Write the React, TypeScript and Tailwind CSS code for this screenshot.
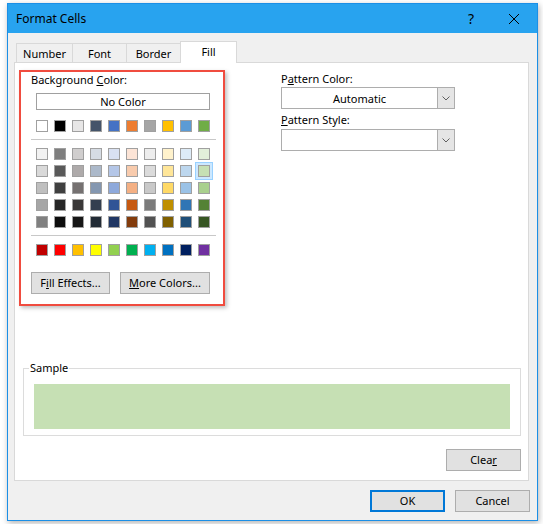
import React from 'react';

const themeRow = [
    'bg-[#ffffff]', 'bg-[#000000]', 'bg-[#e7e6e6]', 'bg-[#44546a]', 'bg-[#4472c4]',
    'bg-[#ed7d31]', 'bg-[#a5a5a5]', 'bg-[#ffc000]', 'bg-[#5b9bd5]', 'bg-[#70ad47]',
];

const tintRows = [
    ['bg-[#f2f2f2]', 'bg-[#7f7f7f]', 'bg-[#d0cece]', 'bg-[#d6dce4]', 'bg-[#d9e1f2]', 'bg-[#fce4d6]', 'bg-[#ededed]', 'bg-[#fff2cc]', 'bg-[#ddebf7]', 'bg-[#e2efda]'],
    ['bg-[#d9d9d9]', 'bg-[#595959]', 'bg-[#aeaaaa]', 'bg-[#acb9ca]', 'bg-[#b4c6e7]', 'bg-[#f8cbad]', 'bg-[#dbdbdb]', 'bg-[#ffe699]', 'bg-[#bdd7ee]', 'bg-[#c6e0b4]'],
    ['bg-[#bfbfbf]', 'bg-[#404040]', 'bg-[#757171]', 'bg-[#8497b0]', 'bg-[#8ea9db]', 'bg-[#f4b084]', 'bg-[#c9c9c9]', 'bg-[#ffd966]', 'bg-[#9bc2e6]', 'bg-[#a9d08e]'],
    ['bg-[#a6a6a6]', 'bg-[#262626]', 'bg-[#3a3838]', 'bg-[#333f4f]', 'bg-[#305496]', 'bg-[#c65911]', 'bg-[#7b7b7b]', 'bg-[#bf8f00]', 'bg-[#2f75b5]', 'bg-[#548235]'],
    ['bg-[#808080]', 'bg-[#0d0d0d]', 'bg-[#161616]', 'bg-[#222b35]', 'bg-[#203764]', 'bg-[#833c0c]', 'bg-[#525252]', 'bg-[#806000]', 'bg-[#1f4e78]', 'bg-[#375623]'],
];

const standardRow = [
    'bg-[#c00000]', 'bg-[#ff0000]', 'bg-[#ffc000]', 'bg-[#ffff00]', 'bg-[#92d050]',
    'bg-[#00b050]', 'bg-[#00b0f0]', 'bg-[#0070c0]', 'bg-[#002060]', 'bg-[#7030a0]',
];

const Swatch: React.FC<{ color: string; selected?: boolean }> = ({ color, selected }) => (
    <div
        className={`h-[12px] w-[12px] border border-[#a0a0a0] ${color} ${
            selected ? 'shadow-[0_0_0_2px_#cce8ff,0_0_0_3px_#99d1ff]' : ''
        }`}
    />
);

const SwatchRow: React.FC<{ colors: string[]; selectedIndex?: number }> = ({ colors, selectedIndex }) => (
    <div className="grid w-[174px] grid-cols-10 gap-x-[6px]">
        {colors.map((c, i) => (
            <Swatch key={i} color={c} selected={i === selectedIndex} />
        ))}
    </div>
);

const Chevron = () => (
    <svg width="8" height="5" viewBox="0 0 8 5" fill="none">
        <path d="M0.5 0.5 L4 4 L7.5 0.5" stroke="#606060" strokeWidth="1" />
    </svg>
);

const Combo: React.FC<{ value?: string }> = ({ value }) => (
    <div className="flex h-[22px] w-[174px] border border-[#adadad] bg-white">
        <div className="flex flex-1 items-center justify-center pt-[2px]">{value}</div>
        <div className="flex w-[17px] items-center justify-center border-l border-[#adadad] bg-[#e5e5e5]">
            <Chevron />
        </div>
    </div>
);

const Button: React.FC<{ className?: string; children: React.ReactNode }> = ({ className = '', children }) => (
    <div className={`flex h-[22px] items-center justify-center border border-[#adadad] bg-[#e1e1e1] pt-px ${className}`}>
        {children}
    </div>
);

const App: React.FC = () => {
    return (
        <div className="h-[524px] w-[543px] bg-white pl-[7px] pt-[3px] font-['Noto_Sans',sans-serif] text-[11px] text-black">
            <div className="flex h-[518px] w-[531px] flex-col border border-[#1b8fe6] bg-[#f0f0f0] shadow-[1px_2px_6px_rgba(0,0,0,0.3)]">
                {/* title bar */}
                <div className="flex h-[29px] items-center bg-[#28a3ef] pl-[8px]">
                    <span className="text-[12px]">Format Cells</span>
                    <span className="ml-auto mr-[35px] text-[14px]">?</span>
                    <svg width="10" height="10" viewBox="0 0 10 10" className="mr-[18px]">
                        <path d="M0 0 L10 10 M10 0 L0 10" stroke="#000" strokeWidth="1" />
                    </svg>
                </div>

                <div className="flex flex-1 flex-col pl-[6px] pr-[7px] pt-[8px]">
                    {/* tabs */}
                    <div className="flex h-[21px] items-end pl-[2px]">
                        <div className="flex h-[19px] w-[57px] items-center justify-center border-l border-r border-t border-[#d9d9d9] pt-[2px]">Number</div>
                        <div className="flex h-[19px] w-[54px] items-center justify-center border-r border-t border-[#d9d9d9] pt-[2px]">Font</div>
                        <div className="flex h-[19px] w-[53px] items-center justify-center border-t border-[#d9d9d9] pt-[2px]">Border</div>
                        <div className="relative z-10 -mb-px flex h-[22px] w-[57px] items-center justify-center border-l border-r border-t border-[#d9d9d9] bg-white">Fill</div>
                    </div>

                    {/* panel */}
                    <div className="flex h-[419px] w-[515px] flex-col border border-[#d9d9d9] bg-white">
                        <div className="mt-[7px] flex">
                            <div className="ml-[4px] flex h-[236px] w-[206px] flex-col border-2 border-[#f04c3f] shadow-[2px_2px_4px_rgba(0,0,0,0.25)]">
                                <div className="pl-[10px] leading-[16px]">
                                    Background <span className="underline">C</span>olor:
                                </div>
                                <div className="ml-[15px] mt-[5px] flex h-[17px] w-[174px] items-center justify-center border border-[#a0a0a0] pt-px">No Color</div>
                                <div className="ml-[15px] mt-[10px]">
                                    <SwatchRow colors={themeRow} />
                                </div>
                                <div className="ml-[10px] mt-[7px] h-px w-[185px] bg-[#c8c8c8]" />
                                <div className="ml-[15px] mt-[8px] flex flex-col gap-[5px]">
                                    {tintRows.map((row, i) => (
                                        <SwatchRow key={i} colors={row} selectedIndex={i === 1 ? 9 : undefined} />
                                    ))}
                                </div>
                                <div className="ml-[10px] mt-[7px] h-px w-[185px] bg-[#c8c8c8]" />
                                <div className="ml-[15px] mt-[8px]">
                                    <SwatchRow colors={standardRow} />
                                </div>
                                <div className="ml-[10px] mt-[16px] flex gap-[10px]">
                                    <Button className="w-[79px]">
                                        <span>F<span className="underline">i</span>ll Effects...</span>
                                    </Button>
                                    <Button className="w-[90px]">
                                        <span><span className="underline">M</span>ore Colors...</span>
                                    </Button>
                                </div>
                            </div>

                            <div className="ml-[56px] mt-[1px] flex flex-col">
                                <div className="leading-[16px]">
                                    P<span className="underline">a</span>ttern Color:
                                </div>
                                <Combo value="Automatic" />
                                <div className="mt-[3px] leading-[16px]">
                                    <span className="underline">P</span>attern Style:
                                </div>
                                <div className="mt-[1px]">
                                    <Combo />
                                </div>
                            </div>
                        </div>

                        {/* sample */}
                        <div className="relative ml-[8px] mt-[62px] h-[68px] w-[498px] border border-[#dcdcdc] pl-[10px] pt-[15px]">
                            <span className="absolute left-[5px] top-[-9px] bg-white px-px leading-[16px]">Sample</span>
                            <div className="h-[45px] w-[476px] bg-[#c6e0b4]" />
                        </div>

                        <div className="mr-[7px] mt-[13px] flex justify-end">
                            <Button className="w-[75px]">
                                <span>Clea<span className="underline">r</span></span>
                            </Button>
                        </div>
                    </div>

                    {/* footer buttons */}
                    <div className="mt-[9px] flex justify-end gap-[10px]">
                        <div className="flex h-[22px] w-[75px] items-center justify-center border-2 border-[#0078d7] bg-[#e1e1e1] pt-px">OK</div>
                        <Button className="w-[75px]">Cancel</Button>
                    </div>
                </div>
            </div>
        </div>
    );
};

export default App;
